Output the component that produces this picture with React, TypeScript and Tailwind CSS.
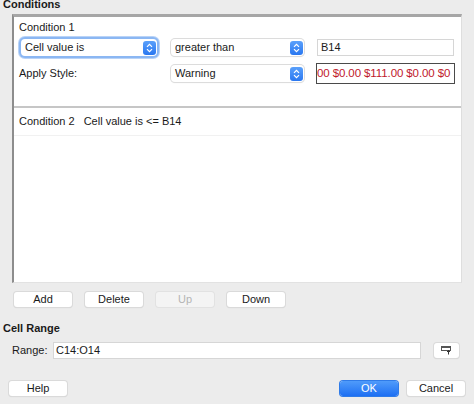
import React from "react";

const font = { fontFamily: '"Liberation Sans", Arial, sans-serif' };

const Stepper = () => (
  <span className="flex h-[14px] w-[13px] items-center justify-center rounded-[3px] bg-gradient-to-b from-[#5aa0fb] to-[#2a77f0]">
    <svg width="7" height="10" viewBox="0 0 7 10" fill="none">
      <path d="M1 3.8 L3.5 1.3 L6 3.8" stroke="white" strokeWidth="1.2" />
      <path d="M1 6.2 L3.5 8.7 L6 6.2" stroke="white" strokeWidth="1.2" />
    </svg>
  </span>
);

const Select: React.FC<{ label: string; width: string; focused?: boolean }> = ({
  label,
  width,
  focused,
}) => (
  <div
    className={`${width} flex h-[17px] items-center justify-between rounded-[4px] bg-white pl-[4px] pr-[1px] ${
      focused
        ? "shadow-[0_0_0_2px_#8bb7f3,0_0_0_3px_#b9d3f7]"
        : "shadow-[0_0_0_1px_#dcdcdc,0_1px_1px_rgba(0,0,0,0.12)]"
    }`}
  >
    <span className="text-[11px] text-[#1a1a1a]">{label}</span>
    <Stepper />
  </div>
);

const Button: React.FC<{ label: string; disabled?: boolean; primary?: boolean; className?: string }> = ({
  label,
  disabled,
  primary,
  className = "",
}) => (
  <div
    className={`flex h-[15px] w-[58px] items-center justify-center rounded-[3px] text-[11px] ${className} ${
      primary
        ? "bg-gradient-to-b from-[#4f9bfa] to-[#1d6ff3] text-white shadow-[0_0_0_1px_#2f7be8]"
        : disabled
        ? "bg-[#f4f4f4] text-[#b5b5b5] shadow-[0_0_0_1px_#e2e2e2]"
        : "bg-white text-[#1a1a1a] shadow-[0_0_0_1px_#dadada,0_1px_1px_rgba(0,0,0,0.15)]"
    }`}
  >
    {label}
  </div>
);

export default function App() {
  return (
    <div className="relative h-[404px] w-[474px] overflow-hidden bg-[#ececec]" style={font}>
      <div className="-mt-[2px] pl-[3px] text-[11px] font-bold leading-[13px] text-[#1a1a1a]">Conditions</div>

      {/* conditions list */}
      <div className="ml-[12px] mt-[3px] flex h-[269px] w-[450px] flex-col border-t-[3px] border-l-2 border-r border-b border-t-[#a6a6a6] border-l-[#8d8d8d] border-r-[#dedede] border-b-[#e2e2e2] bg-white">
        <div className="flex h-[89px] flex-col px-[5px] pt-[4px]">
          <div className="text-[11px] leading-[13px] text-[#1a1a1a]">Condition 1</div>
          <div className="mt-[5px] flex items-center">
            <div className="ml-[2px]">
              <Select label="Cell value is" width="w-[136px]" focused />
            </div>
            <div className="ml-[14px]">
              <Select label="greater than" width="w-[133px]" />
            </div>
            <div className="ml-[13px] flex h-[17px] w-[137px] items-center border border-[#d6d6d6] bg-white pl-[3px] text-[11px] text-[#1a1a1a]">
              B14
            </div>
          </div>
          <div className="mt-[7px] flex items-center">
            <div className="w-[152px] text-[11px] text-[#1a1a1a]">Apply Style:</div>
            <Select label="Warning" width="w-[133px]" />
            <div className="ml-[12px] flex h-[21px] w-[139px] items-center overflow-hidden whitespace-nowrap border border-[#4a4a4a] bg-white text-[11.5px] tracking-[-0.1px] text-[#c0182b]">
              <span>00 $0.00 $111.00 $0.00 $0</span>
            </div>
          </div>
        </div>
        <div className="h-[2px] bg-[#c6c6c6]" />
        <div className="flex h-[28px] items-center border-b border-[#f1f1f1] px-[5px] text-[11px] text-[#1a1a1a]">
          Condition 2<span className="ml-[9px]">Cell value is &lt;= B14</span>
        </div>
      </div>

      {/* list actions */}
      <div className="ml-[14px] mt-[9px] flex gap-[13px]">
        <Button label="Add" />
        <Button label="Delete" />
        <Button label="Up" disabled />
        <Button label="Down" />
      </div>

      <div className="mt-[15px] pl-[3px] text-[11px] font-bold leading-[13px] text-[#1a1a1a]">Cell Range</div>
      <div className="mt-[7px] flex items-center">
        <div className="w-[53px] pl-[12px] text-[11px] text-[#1a1a1a]">Range:</div>
        <div className="flex h-[17px] w-[368px] items-center border border-[#d6d6d6] bg-white pl-[2px] text-[11px] text-[#1a1a1a]">
          C14:O14
        </div>
        <div className="ml-[13px] flex h-[15px] w-[25px] items-center justify-center rounded-[3px] bg-white shadow-[0_0_0_1px_#dadada,0_1px_1px_rgba(0,0,0,0.15)]">
          <svg width="11" height="9" viewBox="0 0 11 9" fill="none">
            <rect x="0.5" y="0.5" width="9" height="4" stroke="#555" fill="none" />
            <rect x="0.5" y="0.5" width="9" height="1.5" fill="#555" />
            <path d="M7.5 8.5 V4.5 M6 6 L7.5 4.5 L9 6" stroke="#333" strokeWidth="1" />
          </svg>
        </div>
      </div>

      {/* dialog buttons */}
      <div className="mt-[22px] flex items-center px-[9px]">
        <Button label="Help" className="w-[57px]" />
        <div className="flex-1" />
        <Button label="OK" primary />
        <Button label="Cancel" className="ml-[9px] w-[57px]" />
      </div>
    </div>
  );
}
